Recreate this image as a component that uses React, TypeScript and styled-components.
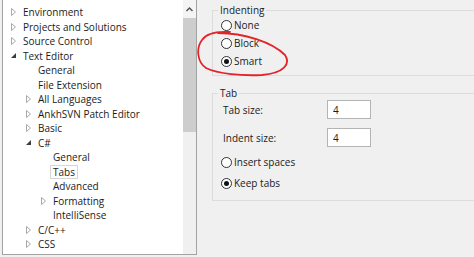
import React from 'react';
import styled, { createGlobalStyle } from 'styled-components';

const GlobalStyle = createGlobalStyle`
    html, body {
        margin: 0;
        padding: 0;
        background: #f0f0f0;
    }
    body {
        font-family: 'Open Sans', 'Noto Sans', sans-serif;
        font-size: 10px;
        color: #1b1b1b;
    }
`;

const Window = styled.div`
    display: flex;
    width: 474px;
    height: 257px;
    overflow: hidden;
`;

const Tree = styled.div`
    display: flex;
    margin-left: 2px;
    width: 195px;
    height: 255px;
    box-sizing: border-box;
    border: 1px solid #a3a3a3;
    border-top: none;
    background: #ffffff;
    overflow: hidden;
`;

const TreeList = styled.div`
    flex: 1;
    padding-top: 4.75px;
`;

const Row = styled.div<{ level: number }>`
    display: flex;
    align-items: center;
    height: 14.5px;
    padding-left: ${props => props.level * 15}px;
    white-space: nowrap;
`;

const Expander = styled.span`
    display: flex;
    align-items: center;
    width: 20px;
    height: 100%;
    padding-left: 8px;
    box-sizing: border-box;
`;

const Label = styled.span<{ selected?: boolean }>`
    line-height: 12px;
    ${props => props.selected && `
        border: 1px solid #d6d6d6;
        margin-left: -3px;
        padding: 0 2px;
    `}
`;

const ScrollBar = styled.div`
    display: flex;
    flex-direction: column;
    width: 13px;
    background: #f0f0f0;
`;

const ScrollArrow = styled.div`
    height: 18px;
    display: flex;
    align-items: center;
    justify-content: center;
    background: #f4f4f4;
`;

const ScrollThumb = styled.div`
    height: 114px;
    background: #cdcdcd;
`;

const Panel = styled.div`
    position: relative;
    flex: 1;
    padding: 4px 0 0 15px;
    overflow: hidden;
`;

const GroupBox = styled.fieldset<{ gapTop?: number; padBottom: number }>`
    width: 300px;
    margin: ${props => props.gapTop || 0}px 0 0;
    padding: 0 0 ${props => props.padBottom}px 8px;
    border: 1px solid #dcdcdc;
    min-inline-size: 0;
`;

const Legend = styled.legend`
    padding: 0 2px;
    margin-left: -3px;
    line-height: 12px;
`;

const RadioRow = styled.label<{ mt?: number }>`
    display: flex;
    align-items: center;
    gap: 2px;
    height: 18px;
    margin-top: ${props => props.mt || 0}px;
`;

const RadioCircle = styled.span<{ checked?: boolean }>`
    display: flex;
    align-items: center;
    justify-content: center;
    width: 11px;
    height: 11px;
    box-sizing: border-box;
    border: 1px solid #333333;
    border-radius: 50%;
    background: #ffffff;
    &::after {
        content: '';
        display: ${props => props.checked ? 'block' : 'none'};
        width: 5px;
        height: 5px;
        border-radius: 50%;
        background: #111111;
    }
`;

const FieldRow = styled.div<{ mt: number }>`
    display: flex;
    align-items: center;
    margin-top: ${props => props.mt}px;
    padding-left: 2px;
`;

const FieldLabel = styled.span`
    width: 104px;
`;

const NumberBox = styled.input`
    width: 44px;
    height: 19px;
    box-sizing: border-box;
    border: 1px solid #b4b4b4;
    background: #ffffff;
    padding: 0 0 0 5px;
    font-family: inherit;
    font-size: 10px;
    color: #1b1b1b;
    outline: none;
`;

const Scribble = styled.svg`
    position: absolute;
    left: -1px;
    top: 28px;
    pointer-events: none;
`;

const Collapsed = () => (
    <svg width="5" height="8" viewBox="0 0 5 8">
        <polygon points="0.5,0.5 4.5,4 0.5,7.5" fill="none" stroke="#a8a8a8" strokeWidth="1" />
    </svg>
);

const Expanded = () => (
    <svg width="5" height="5" viewBox="0 0 5 5">
        <polygon points="5,0 5,5 0,5" fill="#3c3c3c" />
    </svg>
);

type Node = { label: string; level: number; state?: 'open' | 'closed'; selected?: boolean };

const nodes: Node[] = [
    { label: 'Environment', level: 0, state: 'closed' },
    { label: 'Projects and Solutions', level: 0, state: 'closed' },
    { label: 'Source Control', level: 0, state: 'closed' },
    { label: 'Text Editor', level: 0, state: 'open' },
    { label: 'General', level: 1 },
    { label: 'File Extension', level: 1 },
    { label: 'All Languages', level: 1, state: 'closed' },
    { label: 'AnkhSVN Patch Editor', level: 1, state: 'closed' },
    { label: 'Basic', level: 1, state: 'closed' },
    { label: 'C#', level: 1, state: 'open' },
    { label: 'General', level: 2 },
    { label: 'Tabs', level: 2, selected: true },
    { label: 'Advanced', level: 2 },
    { label: 'Formatting', level: 2, state: 'closed' },
    { label: 'IntelliSense', level: 2 },
    { label: 'C/C++', level: 1, state: 'closed' },
    { label: 'CSS', level: 1, state: 'closed' },
    { label: 'F#', level: 1, state: 'closed' },
];

const Radio: React.FC<{ label: string; checked?: boolean; mt?: number }> = ({ label, checked, mt }) => (
    <RadioRow mt={mt}>
        <RadioCircle checked={checked} />
        <span>{label}</span>
    </RadioRow>
);

const App: React.FC = () => (
    <Window>
        <GlobalStyle />
        <Tree>
            <TreeList>
                {nodes.map((n, i) => (
                    <Row key={i} level={n.level}>
                        <Expander>
                            {n.state === 'closed' && <Collapsed />}
                            {n.state === 'open' && <Expanded />}
                        </Expander>
                        <Label selected={n.selected}>{n.label}</Label>
                    </Row>
                ))}
            </TreeList>
            <ScrollBar>
                <ScrollArrow>
                    <svg width="7" height="5" viewBox="0 0 7 5">
                        <polyline points="0.5,4 3.5,1 6.5,4" fill="none" stroke="#505050" strokeWidth="1.4" />
                    </svg>
                </ScrollArrow>
                <ScrollThumb />
            </ScrollBar>
        </Tree>
        <Panel>
            <GroupBox padBottom={5}>
                <Legend>Indenting</Legend>
                <Radio label="None" />
                <Radio label="Block" />
                <Radio label="Smart" checked />
            </GroupBox>
            <GroupBox gapTop={11} padBottom={8}>
                <Legend>Tab</Legend>
                <FieldRow mt={1}>
                    <FieldLabel>Tab size:</FieldLabel>
                    <NumberBox defaultValue="4" />
                </FieldRow>
                <FieldRow mt={9}>
                    <FieldLabel>Indent size:</FieldLabel>
                    <NumberBox defaultValue="4" />
                </FieldRow>
                <Radio label="Insert spaces" mt={6} />
                <Radio label="Keep tabs" checked mt={3} />
            </GroupBox>
            <Scribble width="96" height="50" viewBox="0 0 96 50">
                <path
                    d="M22 5 C 48 5, 76 14, 89 27 C 95 36, 88 45, 66 47 C 46 48, 22 46, 10 40 C 1 34, 0 20, 6 12 C 10 6, 20 3, 34 4"
                    fill="none"
                    stroke="#e2232a"
                    strokeWidth="1.8"
                    strokeLinecap="round"
                />
            </Scribble>
        </Panel>
    </Window>
);

export default App;
